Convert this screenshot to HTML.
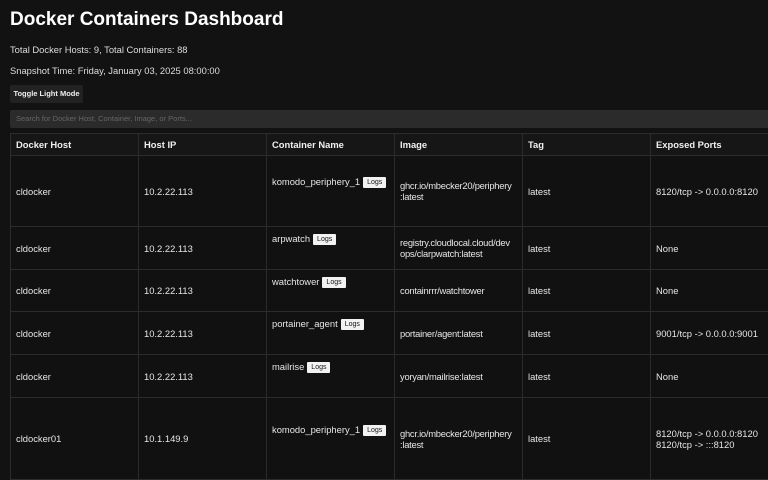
<!DOCTYPE html>
<html><head><meta charset="utf-8"><style>
*{box-sizing:border-box}
body{margin:0;background:#121212;color:#e6e6e6;font-family:"Liberation Sans",Arial,sans-serif;width:768px;height:462px;overflow:hidden;position:relative}
h1{position:absolute;left:10px;top:9px;margin:0;font-size:19px;font-weight:bold;color:#fff}
.p{position:absolute;left:10px;font-size:9.4px;color:#ddd}
.btn{position:absolute;left:10px;top:85px;width:73px;height:18px;background:#222;color:#eee;font-size:7.5px;font-weight:bold;line-height:18px;text-align:center;border-radius:2px}
.search{position:absolute;left:10px;top:110px;width:770px;height:18px;background:#2b2b2b;color:#666;font-size:7.5px;line-height:18px;padding-left:6px;border-radius:2px}
table{position:absolute;left:10px;top:133px;border-collapse:collapse;table-layout:fixed;width:768px}
td,th{border:1px solid #2c2c2c;width:128px;font-size:9.4px;text-align:left;padding:0 5px;vertical-align:middle;background:#111;color:#e6e6e6;line-height:11px}
th{background:#161616;font-weight:bold;height:22px;color:#f0f0f0}
td.c{padding-bottom:18px;white-space:nowrap}
td.i{white-space:nowrap;letter-spacing:-0.25px;overflow:hidden}
.l{display:inline-block;background:#f2f2f2;color:#111;font-size:7px;padding:1px 4px;border-radius:1px;margin-left:3px;line-height:9px;vertical-align:1px}
</style></head><body>
<h1>Docker Containers Dashboard</h1>
<div class="p" style="top:44px">Total Docker Hosts: 9, Total Containers: 88</div>
<div class="p" style="top:65px">Snapshot Time: Friday, January 03, 2025 08:00:00</div>
<div class="btn">Toggle Light Mode</div>
<div class="search">Search for Docker Host, Container, Image, or Ports...</div>
<table>
<tr><th>Docker Host</th><th>Host IP</th><th>Container Name</th><th>Image</th><th>Tag</th><th>Exposed Ports</th></tr>
<tr style="height:71px"><td>cldocker</td><td>10.2.22.113</td><td class="c">komodo_periphery_1<span class="l">Logs</span></td><td class="i">ghcr.io/mbecker20/periphery<br>:latest</td><td>latest</td><td>8120/tcp -&gt; 0.0.0.0:8120</td></tr>
<tr style="height:43px"><td>cldocker</td><td>10.2.22.113</td><td class="c">arpwatch<span class="l">Logs</span></td><td class="i">registry.cloudlocal.cloud/dev<br>ops/clarpwatch:latest</td><td>latest</td><td>None</td></tr>
<tr style="height:42px"><td>cldocker</td><td>10.2.22.113</td><td class="c">watchtower<span class="l">Logs</span></td><td class="i">containrrr/watchtower</td><td>latest</td><td>None</td></tr>
<tr style="height:43px"><td>cldocker</td><td>10.2.22.113</td><td class="c">portainer_agent<span class="l">Logs</span></td><td class="i">portainer/agent:latest</td><td>latest</td><td>9001/tcp -&gt; 0.0.0.0:9001</td></tr>
<tr style="height:43px"><td>cldocker</td><td>10.2.22.113</td><td class="c">mailrise<span class="l">Logs</span></td><td class="i">yoryan/mailrise:latest</td><td>latest</td><td>None</td></tr>
<tr style="height:82px"><td>cldocker01</td><td>10.1.149.9</td><td class="c">komodo_periphery_1<span class="l">Logs</span></td><td class="i">ghcr.io/mbecker20/periphery<br>:latest</td><td>latest</td><td>8120/tcp -&gt; 0.0.0.0:8120<br>8120/tcp -&gt; :::8120</td></tr>
</table>
</body></html>
